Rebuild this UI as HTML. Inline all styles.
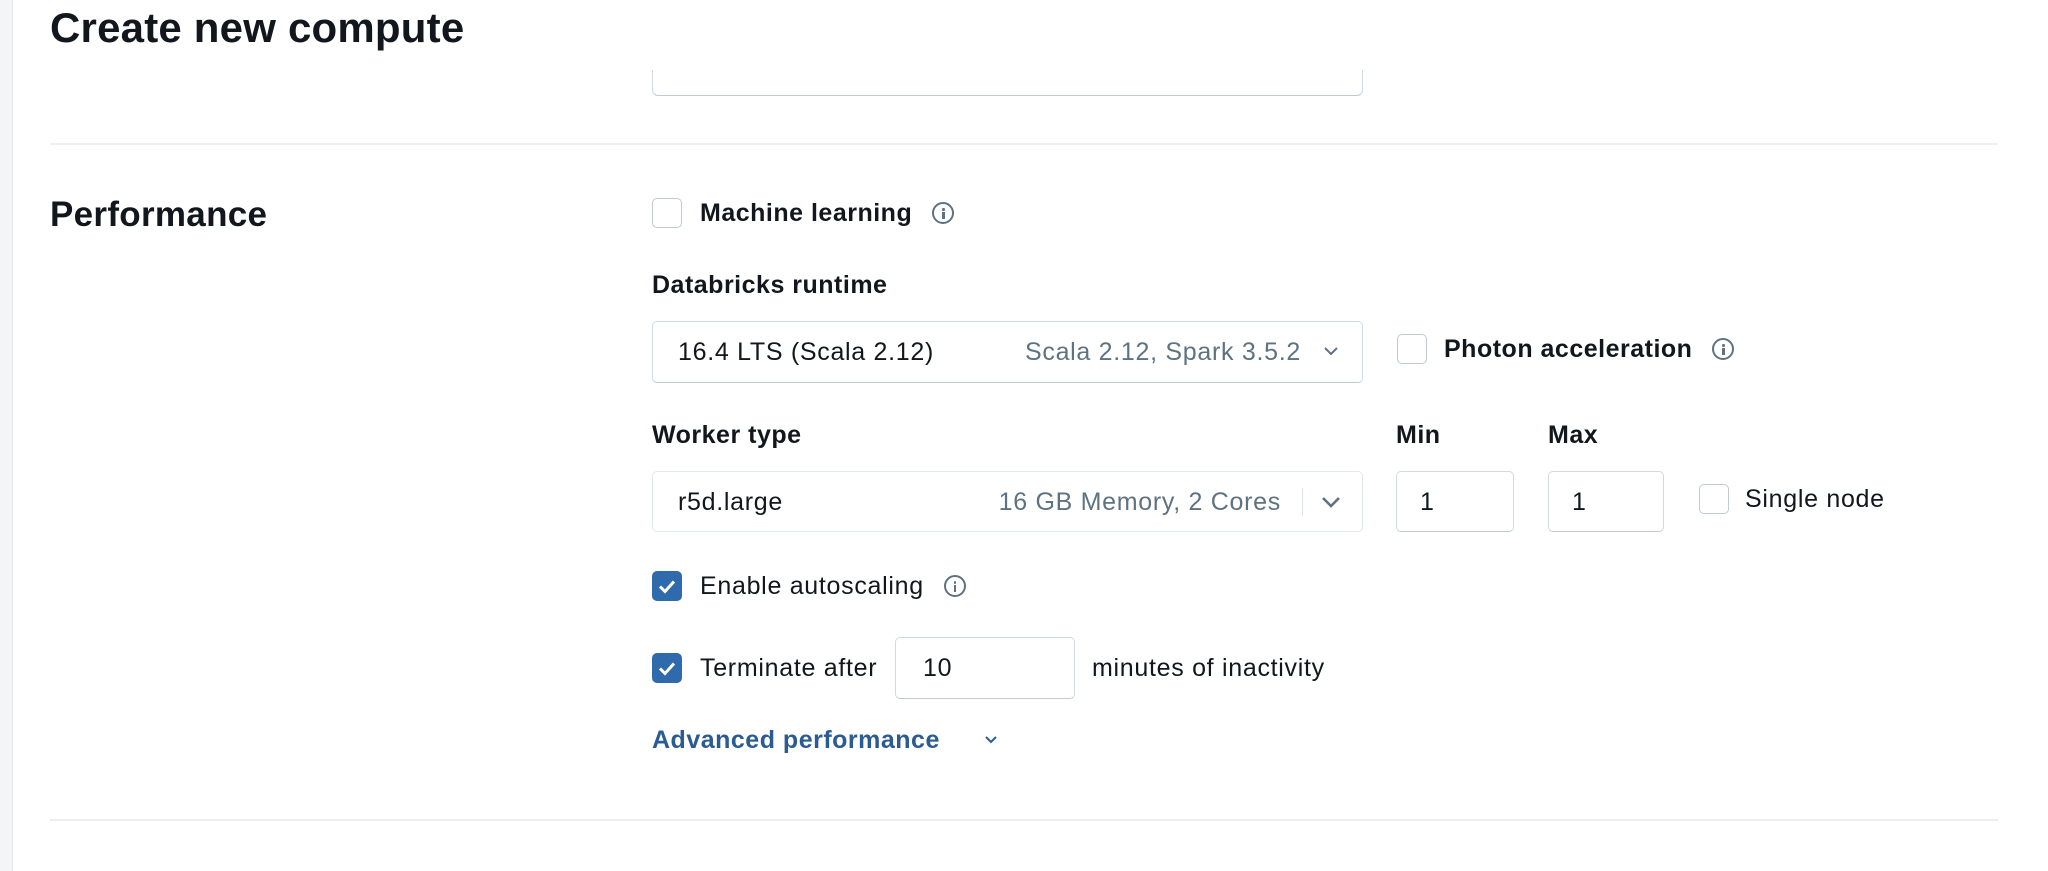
<!DOCTYPE html>
<html><head><meta charset="utf-8"><style>
*{box-sizing:border-box;margin:0;padding:0}
body{width:2048px;height:871px;background:#fff;font-family:"Liberation Sans",sans-serif;color:#11171c;position:relative;overflow:hidden}
.abs{position:absolute}
.strip{left:0;top:0;width:13px;height:871px;background:#f3f5f7;border-right:1px solid #e6e9ec}
.hr{left:50px;width:1948px;height:2px;background:#eceff2}
.lbl{font-size:25px;font-weight:bold;line-height:30px;letter-spacing:0.5px;white-space:nowrap;display:flex;align-items:center}
.txt{font-size:25px;line-height:30px;letter-spacing:0.7px;white-space:nowrap;display:flex;align-items:center}
.box{border:1.5px solid #d1d9e1;border-bottom-color:#c0cad4;border-radius:5px;background:#fff}
.cb{width:30px;height:30px;border:1.5px solid #c0cad4;border-radius:5px;background:#fff}
.cbx{width:30px;height:30px;border-radius:5px;background:#2f6aad}
.info{position:relative;display:inline-block;width:22px;height:22px;border:2px solid #5f7281;border-radius:50%;margin-left:20px;flex:none}
.info:before{content:"";position:absolute;left:8px;top:4px;width:2.5px;height:2.5px;background:#5f7281;border-radius:50%}
.info:after{content:"";position:absolute;left:8px;top:8px;width:2.5px;height:7px;background:#5f7281}
.grey{color:#5f7281}
</style></head><body>
<div class="abs strip"></div>
<div class="abs" style="left:50px;top:3px;font-size:42px;font-weight:bold;line-height:50px;letter-spacing:0.2px">Create new compute</div>
<div class="abs box" style="left:652px;top:70px;width:711px;height:26px;border-top:none;border-radius:0 0 6px 6px"></div>
<div class="abs hr" style="top:143px"></div>
<div class="abs" style="left:50px;top:194px;font-size:35px;font-weight:bold;line-height:42px;letter-spacing:0.3px">Performance</div>

<div class="abs cb" style="left:652px;top:198px"></div>
<div class="abs lbl" style="left:700px;top:198px">Machine learning<span class="info"></span></div>

<div class="abs lbl" style="left:652px;top:270px">Databricks runtime</div>
<div class="abs box" style="left:652px;top:321px;width:711px;height:62px"></div>
<div class="abs txt" style="left:678px;top:337px">16.4 LTS (Scala 2.12)</div>
<div class="abs txt grey" style="right:747px;top:337px">Scala 2.12, Spark 3.5.2</div>
<svg class="abs" style="left:1323px;top:345px" width="16" height="12" viewBox="0 0 16 12"><path d="M2 3l6 6 6-6" fill="none" stroke="#5f7281" stroke-width="2"/></svg>
<div class="abs cb" style="left:1397px;top:334px"></div>
<div class="abs lbl" style="left:1444px;top:334px">Photon acceleration<span class="info"></span></div>

<div class="abs lbl" style="left:652px;top:420px">Worker type</div>
<div class="abs lbl" style="left:1396px;top:420px">Min</div>
<div class="abs lbl" style="left:1548px;top:420px">Max</div>
<div class="abs box" style="left:652px;top:471px;width:711px;height:61px;border-color:#e3e8ed"></div>
<div class="abs txt" style="left:678px;top:487px">r5d.large</div>
<div class="abs txt grey" style="right:767px;top:487px">16 GB Memory, 2 Cores</div>
<div class="abs" style="left:1302px;top:488px;width:1px;height:28px;background:#dde3e9"></div>
<svg class="abs" style="left:1321px;top:495px" width="20" height="14" viewBox="0 0 20 14"><path d="M2 3l8 8 8-8" fill="none" stroke="#5f7281" stroke-width="2.6"/></svg>
<div class="abs box" style="left:1396px;top:471px;width:118px;height:61px"></div>
<div class="abs txt" style="left:1420px;top:487px">1</div>
<div class="abs box" style="left:1548px;top:471px;width:116px;height:61px"></div>
<div class="abs txt" style="left:1572px;top:487px">1</div>
<div class="abs cb" style="left:1699px;top:484px"></div>
<div class="abs txt" style="left:1745px;top:484px">Single node</div>

<div class="abs cbx" style="left:652px;top:571px"></div>
<svg class="abs" style="left:652px;top:571px" width="30" height="30" viewBox="0 0 30 30"><path d="M8 15.5l5 5 9-10" fill="none" stroke="#fff" stroke-width="3"/></svg>
<div class="abs txt" style="left:700px;top:571px">Enable autoscaling<span class="info"></span></div>

<div class="abs cbx" style="left:652px;top:653px"></div>
<svg class="abs" style="left:652px;top:653px" width="30" height="30" viewBox="0 0 30 30"><path d="M8 15.5l5 5 9-10" fill="none" stroke="#fff" stroke-width="3"/></svg>
<div class="abs txt" style="left:700px;top:653px">Terminate after</div>
<div class="abs box" style="left:895px;top:637px;width:180px;height:62px"></div>
<div class="abs txt" style="left:923px;top:653px">10</div>
<div class="abs txt" style="left:1092px;top:653px">minutes of inactivity</div>

<div class="abs lbl" style="left:652px;top:725px;color:#2a5b93">Advanced performance</div>
<svg class="abs" style="left:983px;top:734px" width="16" height="12" viewBox="0 0 16 12"><path d="M3 3l5 5 5-5" fill="none" stroke="#2a5b93" stroke-width="2"/></svg>

<div class="abs hr" style="top:819px"></div>
</body></html>
